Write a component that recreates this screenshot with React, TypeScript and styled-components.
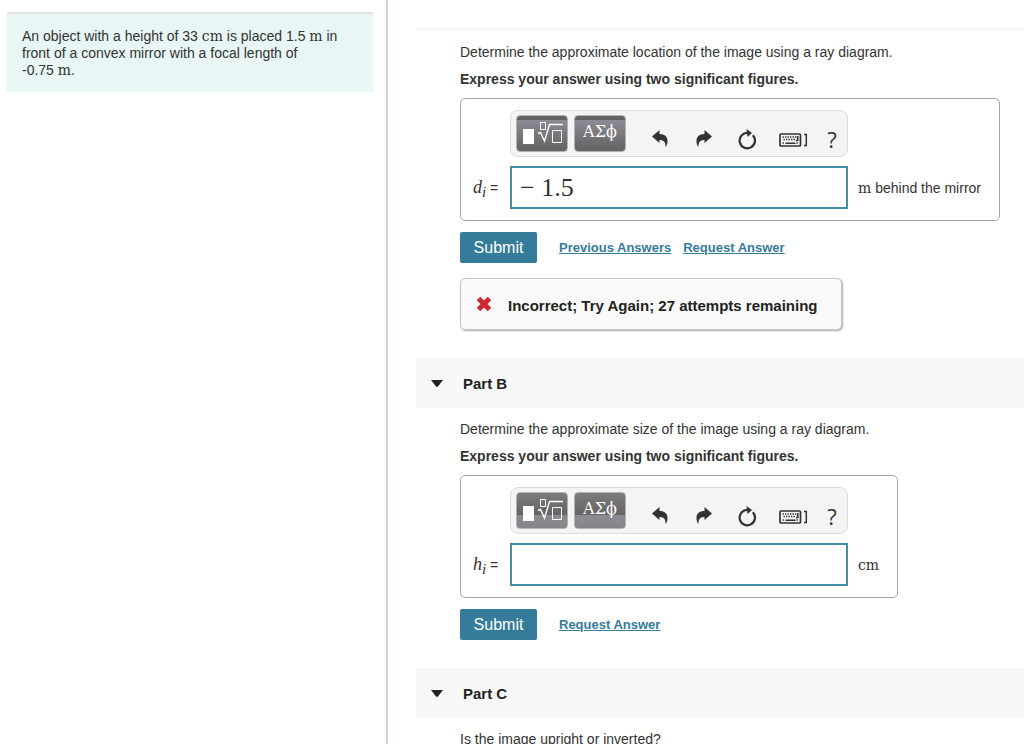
import React, { useId, useState } from "react";
import styled, { createGlobalStyle, css } from "styled-components";

const GlobalStyle = createGlobalStyle`
  *, *::before, *::after { box-sizing: border-box; }
  body {
    margin: 0;
    background: #fff;
    color: #333;
    font-family: "Liberation Sans", Arial, Helvetica, sans-serif;
    font-size: 14px;
    line-height: 17px;
  }
  p, h2 { margin: 0; }
  button { font: inherit; cursor: pointer; }
`;

const serif = `"Liberation Serif", "Times New Roman", serif`;
const slab = `"DejaVu Serif", serif`;

const Shell = styled.div`
  display: grid;
  grid-template-columns: 388px minmax(0, 1fr);
  height: 100vh;
`;

const Sidebar = styled.aside`
  padding: 12px 13px 12px 7px;
  border-right: 2px solid #c6d3e3;
`;

const Problem = styled.p`
  padding: 14px 24px 13px 15px;
  border-top: 2px solid #e0e3e3;
  background: #e8f6f6;
`;

const Unit = styled.span`
  font-family: ${slab};
  font-size: 14px;
  line-height: 1px;
`;

const Work = styled.main`
  padding: 28px 0 0 28px;
  overflow-y: auto;
  scrollbar-width: none;
`;

const TopRule = styled.div`
  height: 3px;
  background: #f8f8f8;
`;

const PartHeader = styled.h2`
  height: 50px;
  background: #f8f8f8;
  font-size: 15px;
`;

const PartToggle = styled.button`
  display: flex;
  align-items: center;
  gap: 20px;
  width: 100%;
  height: 100%;
  padding: 0 15px;
  border: 0;
  background: none;
  color: #222;
`;

const PartBody = styled.section`
  padding: 13px 22px 28px 44px;
`;

const Prompt = styled.p`
  margin-bottom: 10px;
`;

const Instruction = styled.p`
  margin-bottom: 10px;
  font-weight: bold;
`;

const AnswerBox = styled.div`
  display: grid;
  grid-template-columns: 37px minmax(0, 338px) auto;
  align-items: center;
  row-gap: 9px;
  width: fit-content;
  max-width: 100%;
  padding: 11px 18px 11px 12px;
  border: 1px solid #a6a6a6;
  border-radius: 5px;
`;

const Toolbar = styled.div`
  grid-column: 2;
  display: flex;
  align-items: center;
  gap: 6px;
  height: 47px;
  padding-left: 5px;
  border: 1px solid #dcdcdc;
  border-radius: 8px;
  background: #f4f4f4;
`;

const PaletteButton = styled.button<{ $split?: boolean }>`
  display: flex;
  align-items: center;
  justify-content: center;
  width: 52px;
  height: 37px;
  padding: 0 0 4px;
  border: 1px solid #b2b2b2;
  border-radius: 4px;
  color: #fff;
  font-family: ${slab};
  font-size: 16px;
  ${({ $split }) =>
    $split
      ? css`background: linear-gradient(#7c7c7f, #646464 63%, #8b8b92 63%, #858589);`
      : css`background: linear-gradient(#626262 4px, #8d8b95 4px, #666 90%);`}
`;

const Tools = styled.div`
  display: flex;
  align-items: center;
  margin-left: 6px;
  padding-top: 11px;
`;

const ToolButton = styled.button<{ $width: number }>`
  display: flex;
  align-items: center;
  justify-content: center;
  width: ${({ $width }) => $width}px;
  height: 22px;
  padding: 0;
  border: 0;
  background: none;
  color: #333;
  font-family: "Open Sans", "Noto Sans", sans-serif;
  font-size: 22px;
`;

const Variable = styled.label`
  grid-column: 1;
  padding-top: 2px;
  white-space: nowrap;

  i, sub {
    font-family: ${serif};
    font-style: italic;
    line-height: 1px;
  }
  i { font-size: 18px; }
  sub { font-size: 15px; vertical-align: -4px; }
`;

const AnswerInput = styled.input`
  width: 100%;
  height: 43px;
  padding: 0 8px;
  border: 2px solid #468ba8;
  border-radius: 0;
  background: #fff;
  color: #333;
  font-family: ${serif};
  font-size: 26px;
`;

const Suffix = styled.span`
  padding: 2px 0 0 10px;
`;

const Actions = styled.div`
  display: flex;
  align-items: center;
  margin-top: 11px;
`;

const SubmitButton = styled.button`
  width: 77px;
  height: 31px;
  margin-right: 22px;
  padding: 0;
  border: 0;
  border-radius: 2px;
  background: #357b9a;
  color: #fff;
  font-size: 16px;
`;

const ActionLink = styled.a`
  margin-right: 12px;
  color: #357b9a;
  font-size: 13px;
  font-weight: bold;
`;

const Feedback = styled.div`
  display: flex;
  align-items: center;
  gap: 16px;
  width: fit-content;
  height: 52px;
  margin-top: 15px;
  padding: 2px 23px 0 15px;
  border: 1px solid #c4c4c4;
  border-radius: 5px;
  background: #f9f9f9;
  box-shadow: 1px 1px 2px #aaa;
  color: #222;
  font-size: 15px;
  font-weight: bold;
`;

const TemplateIcon = () => (
  <svg width="42" height="26" viewBox="0 0 42 26" fill="none" stroke="#fff" aria-hidden="true">
    <path d="M2 10h11v15H2z" fill="#fff" stroke="none" />
    <path d="M19.500 3.500h5v7h-5z" />
    <path d="M17 14.500l2.500-1 4 8.500L28.500 5.500H42" strokeWidth="1.400" />
    <path d="M31.500 11.500h9v12h-9z" />
  </svg>
);

const UndoIcon = () => (
  <svg width="16" height="18" viewBox="0 0 16 18" fill="currentColor" aria-hidden="true">
    <path d="M0 6.500L7.500 0v4C13 4 15.800 7 15.500 11.500c-.1 2.500-.8 4.300-2 5.500.3-4.700-1.600-7-6-7V13z" />
  </svg>
);

const RedoIcon = () => (
  <svg width="16" height="18" viewBox="0 0 16 18" fill="currentColor" aria-hidden="true">
    <path d="M16 6.500L8.500 0v4C3 4 .2 7 .5 11.500c.1 2.500.8 4.300 2 5.500-.3-4.700 1.600-7 6-7V13z" />
  </svg>
);

const ResetIcon = () => (
  <svg width="18" height="21" viewBox="0 0 18 21" fill="none" aria-hidden="true">
    <path d="M14.800 6.200A7.700 7.700 0 1 1 10 3.900" stroke="currentColor" strokeWidth="2.200" />
    <path d="M8.500 0l5.500 4-4.500 4z" fill="currentColor" />
  </svg>
);

const KeyboardIcon = () => (
  <svg width="29" height="16" viewBox="0 0 29 16" fill="none" stroke="currentColor" aria-hidden="true">
    <rect x="1" y="3" width="20.500" height="12" rx="1" strokeWidth="1.700" />
    <path d="M3.500 6h14M4.500 8.500h12M3.500 12H5M17.500 12H19" strokeWidth="1.400" strokeDasharray="1.400 1.100" />
    <path d="M6.500 12.200h10M18.800 5v4.500H17" strokeWidth="1.500" />
    <path d="M25 3.500H27.300V14.500H25" strokeWidth="1.500" />
  </svg>
);

const CaretIcon = () => (
  <svg width="12" height="7" viewBox="0 0 12 7" fill="#222" aria-hidden="true">
    <path d="M0 0h12L7 6.400q-1 .9-2 0z" />
  </svg>
);

const CrossIcon = () => (
  <svg width="16" height="18" viewBox="0 0 16 18" stroke="#cc2a30" strokeWidth="5" aria-hidden="true">
    <path d="M2.500 2.500l11 11M13.500 2.500l-11 11" />
  </svg>
);

type AnswerProps = {
  symbol: string;
  initial?: string;
  splitButtons?: boolean;
  children: React.ReactNode;
};

function Answer({ symbol, initial = "", splitButtons, children }: AnswerProps) {
  const id = useId();
  const [value, setValue] = useState(initial);
  return (
    <AnswerBox>
      <Toolbar role="toolbar" aria-label="Equation tools">
        <PaletteButton type="button" $split={splitButtons} aria-label="Templates">
          <TemplateIcon />
        </PaletteButton>
        <PaletteButton type="button" $split={splitButtons}>ΑΣϕ</PaletteButton>
        <Tools>
          <ToolButton type="button" $width={44} aria-label="Undo"><UndoIcon /></ToolButton>
          <ToolButton type="button" $width={44} aria-label="Redo"><RedoIcon /></ToolButton>
          <ToolButton type="button" $width={42} aria-label="Reset"><ResetIcon /></ToolButton>
          <ToolButton type="button" $width={50} aria-label="Keyboard shortcuts"><KeyboardIcon /></ToolButton>
          <ToolButton type="button" $width={28}>?</ToolButton>
        </Tools>
      </Toolbar>
      <Variable htmlFor={id}>
        <i>{symbol}</i>
        <sub>i</sub> =
      </Variable>
      <AnswerInput id={id} value={value} onChange={(e) => setValue(e.target.value)} />
      <Suffix>{children}</Suffix>
    </AnswerBox>
  );
}

function Header({ children }: { children: React.ReactNode }) {
  return (
    <PartHeader>
      <PartToggle type="button" aria-expanded="true">
        <CaretIcon />
        {children}
      </PartToggle>
    </PartHeader>
  );
}

export default function App() {
  return (
    <>
      <GlobalStyle />
      <Shell>
        <Sidebar>
          <Problem>
            An object with a height of 33 <Unit>cm</Unit> is placed 1.5 <Unit>m</Unit> in front of a
            convex mirror with a focal length of <br />
            -0.75 <Unit>m</Unit>.
          </Problem>
        </Sidebar>
        <Work>
          <TopRule />
          <PartBody>
            <Prompt>Determine the approximate location of the image using a ray diagram.</Prompt>
            <Instruction>Express your answer using two significant figures.</Instruction>
            <Answer symbol="d" initial="− 1.5">
              <Unit>m</Unit> behind the mirror
            </Answer>
            <Actions>
              <SubmitButton type="button">Submit</SubmitButton>
              <ActionLink href="#previous">Previous Answers</ActionLink>
              <ActionLink href="#request-a">Request Answer</ActionLink>
            </Actions>
            <Feedback role="status">
              <CrossIcon />
              Incorrect; Try Again; 27 attempts remaining
            </Feedback>
          </PartBody>
          <Header>Part B</Header>
          <PartBody>
            <Prompt>Determine the approximate size of the image using a ray diagram.</Prompt>
            <Instruction>Express your answer using two significant figures.</Instruction>
            <Answer symbol="h" splitButtons>
              <Unit>cm</Unit>
            </Answer>
            <Actions>
              <SubmitButton type="button">Submit</SubmitButton>
              <ActionLink href="#request-b">Request Answer</ActionLink>
            </Actions>
          </PartBody>
          <Header>Part C</Header>
          <PartBody>
            <Prompt>Is the image upright or inverted?</Prompt>
          </PartBody>
        </Work>
      </Shell>
    </>
  );
}
